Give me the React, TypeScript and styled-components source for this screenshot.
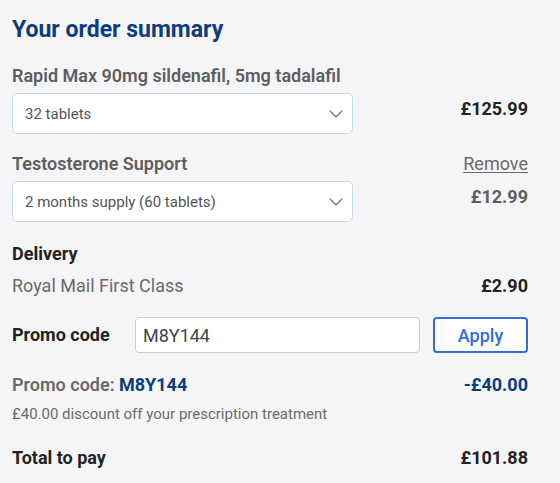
import React from "react";
import styled, { createGlobalStyle } from "styled-components";

const GlobalStyle = createGlobalStyle`
  html, body {
    margin: 0;
    padding: 0;
    background: #f5f5f8;
  }
  body {
    font-family: Roboto, "Liberation Sans", Arial, sans-serif;
    color: #222;
  }
`;

const color = {
  navy: "#0c3c7c",
  dark: "#222222",
  grey: "#5e5e5e",
  soft: "#6a6a6a",
  blue: "#2f6fd6",
};

interface LineItem {
  name: string;
  option: string;
  price: string;
  removable?: boolean;
  muted?: boolean;
}

const items: LineItem[] = [
  {
    name: "Rapid Max 90mg sildenafil, 5mg tadalafil",
    option: "32 tablets",
    price: "£125.99",
  },
  {
    name: "Testosterone Support",
    option: "2 months supply (60 tablets)",
    price: "£12.99",
    removable: true,
    muted: true,
  },
];

const Chevron = () => (
  <svg width="14" height="8" viewBox="0 0 14 8" fill="none">
    <path d="M1 1l6 6 6-6" stroke="#7a7a7a" strokeWidth="1.4" strokeLinecap="round" strokeLinejoin="round" />
  </svg>
);

export default function App() {
  return (
    <>
      <GlobalStyle />
      <Page>
        <Title>Your order summary</Title>

        {items.map((item) => (
          <Item key={item.name}>
            <NameRow>
              <ItemName>{item.name}</ItemName>
              {item.removable && <RemoveLink>Remove</RemoveLink>}
            </NameRow>
            <SelectRow>
              <Select>
                <SelectText>{item.option}</SelectText>
                <Chevron />
              </Select>
              <Price muted={item.muted}>{item.price}</Price>
            </SelectRow>
          </Item>
        ))}

        <Delivery>
          <Label>Delivery</Label>
          <Row>
            <Soft>Royal Mail First Class</Soft>
            <Price>£2.90</Price>
          </Row>
        </Delivery>

        <PromoRow>
          <PromoLabel>Promo code</PromoLabel>
          <PromoField>
            <PromoInput>M8Y144</PromoInput>
            <ApplyButton>Apply</ApplyButton>
          </PromoField>
        </PromoRow>

        <Discount>
          <Row>
            <PromoName>
              Promo code: <Code>M8Y144</Code>
            </PromoName>
            <Price navy>-£40.00</Price>
          </Row>
          <Note>£40.00 discount off your prescription treatment</Note>
        </Discount>

        <Total>
          <Label>Total to pay</Label>
          <Price>£101.88</Price>
        </Total>
      </Page>
    </>
  );
}

const Page = styled.div`
  width: 516px;
  padding: 17px 32px 0 12px;
`;

const Title = styled.h1`
  margin: 0;
  font-size: 23px;
  line-height: 26px;
  font-weight: 700;
  color: ${color.navy};
`;

const Item = styled.div`
  margin-top: 21px;

  & + & {
    margin-top: 18px;
  }
`;

const Row = styled.div`
  display: flex;
  justify-content: space-between;
  align-items: baseline;
`;

const NameRow = styled(Row)``;

const ItemName = styled.div`
  font-size: 18px;
  line-height: 24px;
  font-weight: 600;
  color: ${color.grey};
`;

const RemoveLink = styled.a`
  font-size: 18px;
  line-height: 24px;
  color: ${color.soft};
  text-decoration: underline;
  text-underline-offset: 2px;
  cursor: pointer;
`;

const SelectRow = styled.div`
  display: flex;
  justify-content: space-between;
  align-items: flex-start;
  margin-top: 5px;
`;

const Select = styled.div`
  width: 341px;
  height: 41px;
  box-sizing: border-box;
  display: flex;
  align-items: center;
  justify-content: space-between;
  padding: 0 9px 0 12px;
  background: #fff;
  border: 1px solid #c9dbf2;
  border-radius: 5px;
`;

const SelectText = styled.span`
  font-size: 15px;
  line-height: 20px;
  color: #555;
`;

const Price = styled.div<{ muted?: boolean; navy?: boolean }>`
  font-size: 18px;
  line-height: 24px;
  font-weight: 700;
  color: ${({ muted, navy }) => (navy ? color.navy : muted ? color.grey : color.dark)};
  ${SelectRow} > & {
    margin-top: 4px;
  }
`;

const Label = styled.div`
  font-size: 18px;
  line-height: 24px;
  font-weight: 700;
  color: ${color.dark};
`;

const Soft = styled.div`
  font-size: 18px;
  line-height: 24px;
  color: ${color.soft};
`;

const Delivery = styled.div`
  margin-top: 20px;
  display: flex;
  flex-direction: column;
  gap: 8px;
`;

const PromoRow = styled.div`
  margin-top: 19px;
  display: flex;
  align-items: center;
  height: 36px;
`;

const PromoLabel = styled(Label)`
  width: 123px;
  flex-shrink: 0;
`;

const PromoField = styled.div`
  flex: 1;
  display: flex;
  gap: 13px;
`;

const PromoInput = styled.div`
  flex: 1;
  height: 36px;
  box-sizing: border-box;
  display: flex;
  align-items: center;
  padding: 0 7px;
  font-size: 18px;
  color: #444;
  background: #fff;
  border: 1px solid #c8cec8;
  border-radius: 4px;
`;

const ApplyButton = styled.button`
  width: 95px;
  height: 36px;
  box-sizing: border-box;
  font-family: inherit;
  font-size: 18px;
  font-weight: 500;
  color: ${color.blue};
  background: #fff;
  border: 2px solid ${color.blue};
  border-radius: 4px;
  cursor: pointer;
`;

const Discount = styled.div`
  margin-top: 20px;
  display: flex;
  flex-direction: column;
  gap: 7px;
`;

const PromoName = styled.div`
  font-size: 18px;
  line-height: 24px;
  font-weight: 600;
  color: ${color.soft};
`;

const Code = styled.span`
  color: ${color.navy};
  font-weight: 700;
`;

const Note = styled.div`
  font-size: 15px;
  line-height: 20px;
  color: ${color.soft};
`;

const Total = styled(Row)`
  margin-top: 22px;
`;
